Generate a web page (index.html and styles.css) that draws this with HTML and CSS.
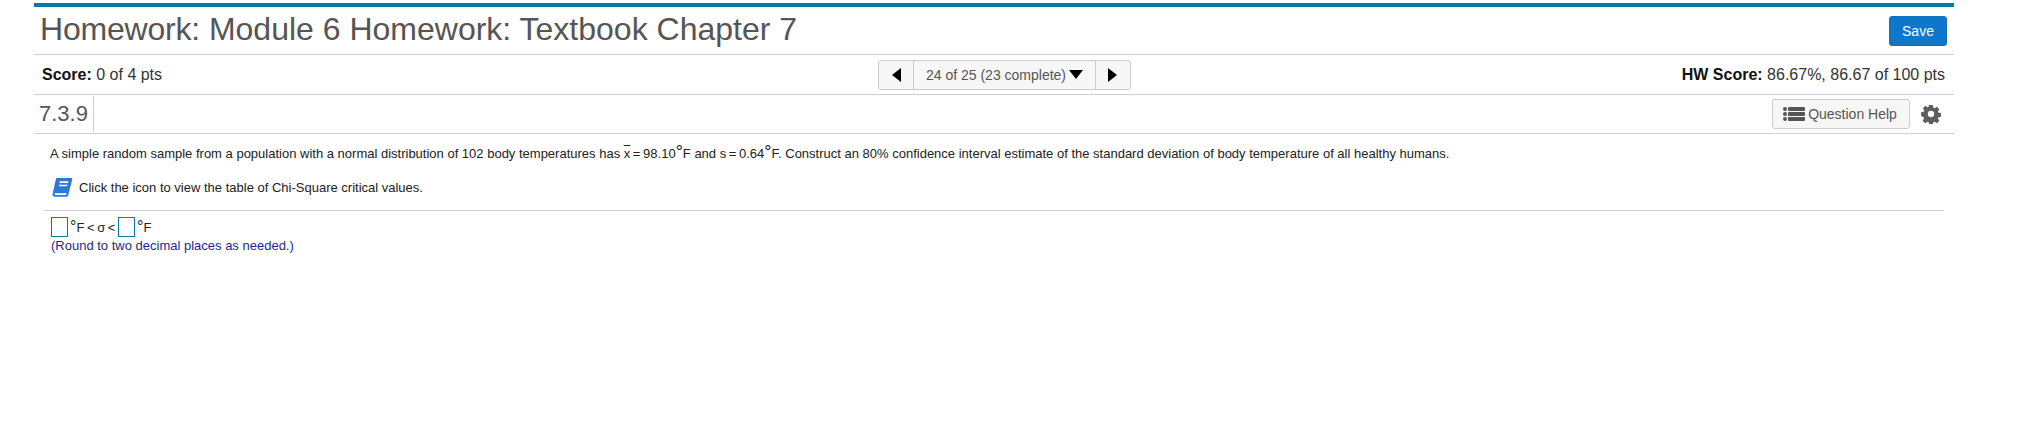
FILE: index.html
```html
<!DOCTYPE html>
<html lang="en">
<head>
<meta charset="utf-8">
<title>Homework</title>
<link rel="stylesheet" href="styles.css">
</head>
<body>
<div class="wrap">
  <header class="title-row">
    <h1 class="title"><span class="title-label">Homework:</span> Module 6 Homework: Textbook Chapter 7</h1>
    <button class="save">Save</button>
  </header>
  <div class="score-row">
    <div class="score"><b>Score:</b> 0 of 4 pts</div>
    <div class="pager">
      <span class="pager-btn"><svg width="10" height="14" viewBox="0 0 10 14"><path d="M10 0V14L1 7Z"/></svg></span>
      <span class="pager-mid">24 of 25 (23 complete)<svg width="14" height="9" viewBox="0 0 14 9"><path d="M0 0H14L7 9Z"/></svg></span>
      <span class="pager-btn"><svg width="10" height="14" viewBox="0 0 10 14"><path d="M0 0V14L9 7Z"/></svg></span>
    </div>
    <div class="hw-score"><b>HW Score:</b> 86.67%, 86.67 of 100 pts</div>
  </div>
  <div class="q-row">
    <div class="q-num">7.3.9</div>
    <div class="q-tools">
      <button class="help">
        <svg width="22" height="14" viewBox="0 0 22 14"><g fill="#555"><circle cx="2" cy="2" r="2"/><circle cx="2" cy="7" r="2"/><circle cx="2" cy="12" r="2"/><rect x="5" y="0" width="17" height="4" rx="1"/><rect x="5" y="5" width="17" height="4" rx="1"/><rect x="5" y="10" width="17" height="4" rx="1"/></g></svg>
        Question Help
      </button>
      <svg class="gear" width="20" height="20" viewBox="0 0 20 20"><path fill="#5f5f5f" fill-rule="evenodd" d="M8 0h4l.5 2.8 1.6.7L16.500 1.900l2.800 2.800-1.600 2.300.7 1.600 2.800.4v4l-2.800.5-.7 1.600 1.600 2.300-2.800 2.800-2.400-1.600-1.600.7-.5 2.800H8l-.5-2.800-1.600-.7-2.400 1.600-2.800-2.800 1.600-2.300-.7-1.600L-1 12V8l2.800-.4.7-1.600L.9 3.700l2.800-2.800 2.200 1.600 1.600-.7zM10 6.500a3.500 3.500 0 1 0 0 7 3.500 3.500 0 0 0 0-7z" transform="translate(1 1) scale(.9)"/></svg>
    </div>
  </div>
  <main class="content">
    <p class="stem">A simple random sample from a population with a normal distribution of 102 body temperatures has <span class="xbar">x</span><span class="thin"> = </span>98.10<span class="deg">°</span>F and s<span class="thin"> = </span>0.64<span class="deg">°</span>F. Construct an 80% confidence interval estimate of the standard deviation of body temperature of all healthy humans.</p>
    <p class="hint">
      <svg class="book" width="21" height="21" viewBox="0 0 22 22"><path fill="#2a7ad6" d="M5 1h15c1 0 1.500.7 1.200 1.600L17 19c-.3 1-1 1.800-2 1.800H3c-2 0-2.800-1.500-2.300-3.500L4 2.500C4.200 1.500 4.500 1 5 1z"/><path fill="#fff" d="M8 4.500h9v1.800H8zM7.500 8h8.500v1.800H7.500zM2.800 17h12.400l-.4 1.800H3z"/></svg>
      Click the icon to view the table of Chi-Square critical values.
    </p>
    <div class="answer">
      <div class="answer-line"><span class="box"></span><span class="ans-deg">°</span>F<span class="thin"> &lt; </span>σ<span class="thin"> &lt; </span><span class="box"></span><span class="ans-deg">°</span>F</div>
      <div class="note">(Round to two decimal places as needed.)</div>
    </div>
  </main>
</div>
</body>
</html>
```

FILE: styles.css
```css
* { box-sizing: border-box; }
html, body { margin: 0; padding: 0; background: #fff; }
body { font-family: "Liberation Sans", Arial, sans-serif; color: #111; height: 422px; overflow: hidden; }
.wrap { width: 1920px; margin: 3px 0 0 34px; border-top: 4px solid #007c9c; }
.title-row { height: 48px; border-bottom: 1px solid #cfcfe0; display: flex; align-items: center; justify-content: space-between; padding: 0 7px 0 6px; }
.title { margin: 0 0 3px; font-weight: 400; font-size: 32px; color: #555; line-height: 40px; }
.title-label { letter-spacing: -0.2px; }
.save { width: 58px; height: 30px; background: #0f77c9; color: #fff; border: 1px solid #0d6fbd; border-radius: 3px; font: 14px "Liberation Sans", Arial, sans-serif; padding: 0; }
.score-row { height: 40px; border-bottom: 1px solid #cfcfe0; display: grid; grid-template-columns: 1fr auto 1fr; align-items: center; padding: 0 9px 0 8px; font-size: 16px; color: #333; }
.score b, .hw-score b { color: #111; }
.hw-score { text-align: right; }
.pager { display: flex; height: 30px; margin-left: 22px; border: 1px solid #ccc; border-radius: 3px; background: #f7f7f7; color: #555; font-size: 14px; }
.pager-btn { width: 34px; display: flex; align-items: center; justify-content: center; }
.pager-btn svg, .pager-mid svg { fill: #000; }
.pager-mid { width: 183px; display: flex; align-items: center; justify-content: center; gap: 3px; border-left: 1px solid #ccc; border-right: 1px solid #ccc; }
.q-row { height: 39px; border-bottom: 1px solid #cfcfe0; display: flex; align-items: center; justify-content: space-between; padding-right: 13px; }
.q-num { height: 36px; width: 60px; padding-left: 5px; border-right: 1px solid #cfcfe0; font-size: 22px; line-height: 36px; color: #555; }
.q-tools { display: flex; align-items: center; gap: 11px; }
.help { width: 138px; height: 30px; display: flex; align-items: center; justify-content: center; gap: 3px; padding: 0 2px 0 0; background: #f7f7f7; border: 1px solid #ccc; border-radius: 3px; color: #555; font: 14px "Liberation Sans", Arial, sans-serif; }
.content { padding: 0 10px; font-size: 13px; color: #222; }
.stem { margin: 0; padding: 12px 0 0 6px; line-height: 16px; }
.xbar { text-decoration: overline; }
.thin { word-spacing: -1px; }
.deg { font-size: 18px; line-height: 12px; }
.hint { margin: 0; padding: 11px 0 8px 8px; height: 49px; display: flex; align-items: center; gap: 6px; line-height: 16px; border-bottom: 1px solid #cfcfe0; }
.answer { padding: 6px 0 0 7px; }
.answer-line { display: flex; align-items: center; height: 20px; margin-bottom: 1px; white-space: pre; }
.box { width: 17px; height: 20px; border: 1px solid #007c9c; background: #fff; margin-right: 2px; }
.ans-deg { font-size: 16px; }
.note { color: #1f1f9c; line-height: 16px; }
```
